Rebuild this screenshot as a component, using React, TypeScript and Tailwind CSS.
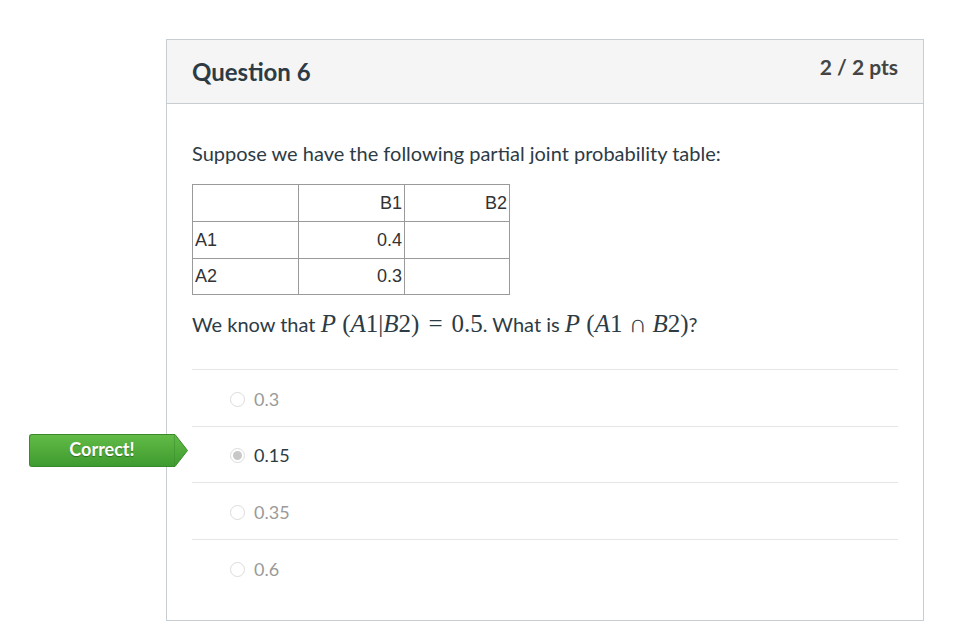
import React from "react";

const answers = [
  { label: "0.3", selected: false },
  { label: "0.15", selected: true },
  { label: "0.35", selected: false },
  { label: "0.6", selected: false },
];

function Radio({ selected }: { selected: boolean }) {
  return (
    <span className="w-[15px] h-[15px] rounded-full border border-[#dcdcdc] bg-white flex items-center justify-center shrink-0">
      {selected && <span className="w-[9px] h-[9px] rounded-full bg-[#c8c8c8]" />}
    </span>
  );
}

function Math({ children }: { children: React.ReactNode }) {
  return (
    <span className="text-[25px]" style={{ fontFamily: '"Liberation Serif", "DejaVu Serif", serif' }}>
      {children}
    </span>
  );
}

export default function App() {
  return (
    <div
      className="w-[977px] h-[625px] bg-white relative text-[#2d3b45]"
      style={{ fontFamily: "Lato, 'Liberation Sans', sans-serif" }}
    >
      <div className="absolute left-[166px] top-[39px] w-[758px] h-[582px] border border-[#c7cdd1] flex flex-col">
        <div className="h-[64px] bg-[#f5f5f5] border-b border-[#c7cdd1] flex items-start justify-between px-[25px]">
          <div className="text-[24px] font-bold mt-[14px] text-[#2d3b45]">Question 6</div>
          <div className="text-[21px] font-bold mt-[11px] text-[#444]">2 / 2 pts</div>
        </div>
        <div className="px-[25px] pt-[36px]">
          <p className="text-[20px] leading-[26px]">Suppose we have the following partial joint probability table:</p>
          <table
            className="mt-[18px] border-collapse text-[18px] text-[#333]"
            style={{ fontFamily: "'Liberation Sans', Arial, sans-serif" }}
          >
            <tbody>
              <tr className="h-[37px]">
                <td className="border border-[#9a9a9a] w-[106px]" />
                <td className="border border-[#9a9a9a] w-[106px] text-right pr-[2px]">B1</td>
                <td className="border border-[#9a9a9a] w-[105px] text-right pr-[2px]">B2</td>
              </tr>
              <tr className="h-[37px]">
                <td className="border border-[#9a9a9a] pl-[2px]">A1</td>
                <td className="border border-[#9a9a9a] text-right pr-[2px]">0.4</td>
                <td className="border border-[#9a9a9a]" />
              </tr>
              <tr className="h-[36px]">
                <td className="border border-[#9a9a9a] pl-[2px]">A2</td>
                <td className="border border-[#9a9a9a] text-right pr-[2px]">0.3</td>
                <td className="border border-[#9a9a9a]" />
              </tr>
            </tbody>
          </table>
          <p className="text-[20px] mt-[14px] leading-[30px]">
            We know that{" "}
            <Math>
              <i>P</i> (<i>A</i>1|<i>B</i>2)<span className="mx-[9px]">=</span>0.5
            </Math>
            . What is{" "}
            <Math>
              <i>P</i> (<i>A</i>1<span className="mx-[6px]">∩</span><i>B</i>2)
            </Math>
            ?
          </p>
          <div className="mt-[30px] border-t border-[#e6e6e6]">
            {answers.map((a) => (
              <div
                key={a.label}
                className="h-[56.5px] flex items-center gap-[9px] pl-[38px] pt-[3px] border-b border-[#e6e6e6] last:border-b-0 box-border"
              >
                <Radio selected={a.selected} />
                <span className={`text-[18px] ${a.selected ? "text-[#2d3b45]" : "text-[#9a9a9a]"}`}>{a.label}</span>
              </div>
            ))}
          </div>
        </div>
      </div>

      {/* Correct badge */}
      <div className="absolute left-[29px] top-[434px] h-[33px] flex">
        <div className="w-[145px] h-full rounded-l-[3px] bg-gradient-to-b from-[#62bb46] to-[#3e9b2f] border border-[#3a8a2c] border-r-0 flex items-center justify-center">
          <span className="text-white font-bold text-[18px] mt-[-2px] [text-shadow:0_1px_1px_rgba(0,0,0,0.35)]">Correct!</span>
        </div>
        <svg width="14" height="33" viewBox="0 0 14 33" className="block">
          <defs>
            <linearGradient id="g" x1="0" y1="0" x2="0" y2="1">
              <stop offset="0" stopColor="#62bb46" />
              <stop offset="1" stopColor="#3e9b2f" />
            </linearGradient>
          </defs>
          <path d="M0 0.5 L1 0.5 L13.5 16.5 L1 32.5 L0 32.5 Z" fill="url(#g)" stroke="#3a8a2c" strokeWidth="1" />
        </svg>
      </div>
    </div>
  );
}
